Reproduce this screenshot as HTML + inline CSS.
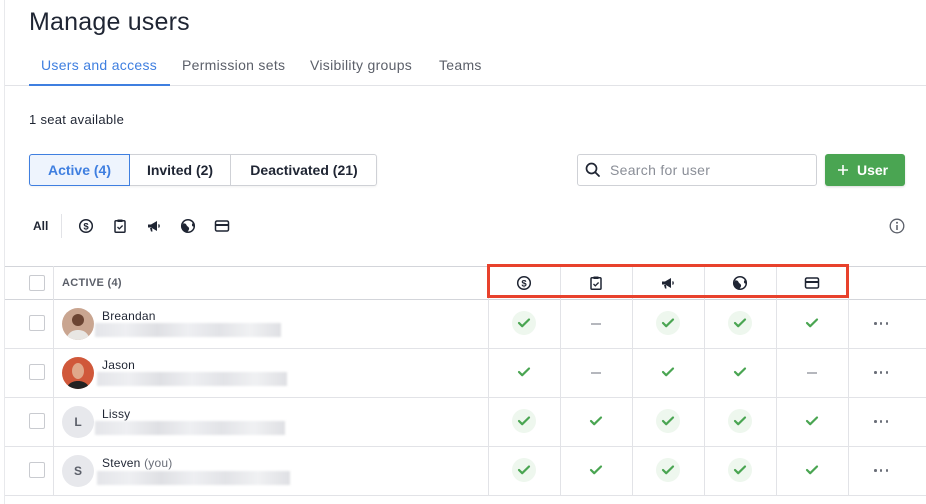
<!DOCTYPE html>
<html><head><meta charset="utf-8"><style>
*{margin:0;padding:0;box-sizing:border-box}
body{width:926px;height:504px;overflow:hidden;background:#fff;font-family:"Liberation Sans",sans-serif;color:#1f2533;position:relative}
.a{position:absolute}
.hl{position:absolute;height:1px;background:#e2e3e7}
.vl{position:absolute;width:1px;background:#e2e3e7}
.cb{position:absolute;width:16px;height:16px;border:1.5px solid #c9cbd0;border-radius:2px;background:#fff}
.ck{position:absolute;width:24px;height:24px;border-radius:50%;display:flex;align-items:center;justify-content:center}
.bg{background:#eef7ee}
.dash{position:absolute;width:10px;height:1.5px;background:#b5b7bd}
.dots{position:absolute;width:14px;height:3px;display:flex;justify-content:space-between}
.dots i{width:2.5px;height:2.5px;border-radius:50%;background:#6a6e78}
.blur{position:absolute;height:14px;background:linear-gradient(90deg,#e4e5e9,#eeeff2,#dfe0e4,#eeeff2,#e2e3e7,#f0f1f3,#dfe0e4);filter:blur(1px)}
.nm{position:absolute;font-size:12px;color:#1f2533;letter-spacing:.2px}
.av{position:absolute;width:32px;height:32px;border-radius:50%;background:#e7e8ec;color:#5b5f69;font-size:12px;font-weight:bold;display:flex;align-items:center;justify-content:center;overflow:hidden}
.t{letter-spacing:.3px}
</style></head><body>
<div class="vl" style="left:4px;top:0;height:504px;background:#e8e9ec"></div>
<div class="a" style="left:29px;top:8px;font-size:25px;color:#1f2533;letter-spacing:.2px">Manage users</div>
<div class="a t" style="left:41px;top:57px;font-size:14px;color:#3f7fe0">Users and access</div>
<div class="a t" style="left:182px;top:57px;font-size:14px;color:#5b5f69">Permission sets</div>
<div class="a t" style="left:310px;top:57px;font-size:14px;color:#5b5f69">Visibility groups</div>
<div class="a t" style="left:439px;top:57px;font-size:14px;color:#5b5f69">Teams</div>
<div class="hl" style="left:5px;top:85px;width:921px"></div>
<div class="a" style="left:29px;top:84px;width:141px;height:2px;background:#3f7fe0"></div>
<div class="a t" style="left:29px;top:112px;font-size:13px">1 seat available</div>

<div class="a" style="left:29px;top:154px;width:348px;height:32px;border:1px solid #cfd1d6;border-radius:3px;box-shadow:0 1px 2px rgba(0,0,0,.06)"></div>
<div class="a" style="left:29px;top:154px;width:101px;height:32px;border:1px solid #3f7fe0;border-radius:3px 0 0 3px;background:#eef4fd;color:#3f7fe0;font-weight:bold;font-size:14px;display:flex;align-items:center;justify-content:center">Active (4)</div>
<div class="a" style="left:130px;top:155px;width:101px;height:30px;border-right:1px solid #cfd1d6;font-weight:bold;font-size:14px;display:flex;align-items:center;justify-content:center">Invited (2)</div>
<div class="a" style="left:231px;top:155px;width:146px;height:30px;font-weight:bold;font-size:14px;display:flex;align-items:center;justify-content:center">Deactivated (21)</div>

<div class="a" style="left:577px;top:154px;width:240px;height:32px;border:1px solid #cfd1d6;border-radius:3px"></div>
<svg class="a" style="left:585px;top:162px" width="16" height="16" viewBox="0 0 16 16"><circle cx="6.5" cy="6.5" r="5" fill="none" stroke="#1f2533" stroke-width="1.7"/><path d="M10.2 10.2L14 14" stroke="#1f2533" stroke-width="1.8" stroke-linecap="round"/></svg>
<div class="a t" style="left:610px;top:162px;font-size:14px;color:#8a8e97">Search for user</div>
<div class="a" style="left:825px;top:154px;width:80px;height:32px;border-radius:3px;background:#4aa552;box-shadow:0 1px 2px rgba(0,0,0,.15)"></div>
<svg class="a" style="left:837px;top:164px" width="12" height="12"><path d="M6 1v10M1 6h10" stroke="#fff" stroke-width="1.6"/></svg>
<div class="a" style="left:857px;top:162px;color:#fff;font-weight:bold;font-size:14px">User</div>

<div class="a" style="left:33px;top:219px;font-size:12px;font-weight:bold">All</div>
<div class="vl" style="left:61px;top:214px;height:24px"></div>
<svg width="0" height="0" style="position:absolute"><defs>
<g id="dol"><circle cx="8" cy="8" r="6.3" fill="none" stroke="#1f2533" stroke-width="1.5"/><text x="8" y="11.3" font-size="9.5" font-family="Liberation Sans" font-weight="bold" text-anchor="middle" fill="#1f2533">$</text></g>
<g id="clip"><rect x="3" y="2.8" width="10" height="11.5" rx="1" fill="none" stroke="#1f2533" stroke-width="1.5"/><rect x="5.5" y="1.5" width="5" height="2.5" fill="#1f2533"/><path d="M5.5 9l1.8 1.8 3.3-3.3" fill="none" stroke="#1f2533" stroke-width="1.3"/></g>
<g id="meg"><path d="M2 6.5h3l6-3.5v10l-6-3.5H2z" fill="#1f2533"/><path d="M4 10l1 3.5h1.5L6 10" fill="#1f2533"/><path d="M12.5 6.5a2 2 0 010 3" fill="none" stroke="#1f2533" stroke-width="1.3"/></g>
<g id="glo"><circle cx="8" cy="8" r="6.3" fill="none" stroke="#1f2533" stroke-width="1.5"/><path d="M3 5.5c1.5-.5 3 0 3.5 1.5s2 1.5 2.5 3-1 3-2 4.5l-1 .2C4 13 2.5 11 2 8.5zM9.5 2.2c1 1.5 2.5 1 3.5 2.5-1 1-1.5 2.5-.5 3.5.8.6 1.5.3 2 .2a6 6 0 00-1-4.5 6 6 0 00-4-1.7z" fill="#1f2533"/></g>
<g id="card"><rect x="1.5" y="3" width="13" height="10" rx="1.5" fill="none" stroke="#1f2533" stroke-width="1.5"/><rect x="1.5" y="6" width="13" height="2" fill="#1f2533"/></g>
<g id="chk"><path d="M3 8l3.2 3.2L13 4.5" fill="none" stroke="#4aa552" stroke-width="2.2" stroke-linecap="round" stroke-linejoin="round"/></g>
</defs></svg>
<svg class="a" style="left:78px;top:218px" width="16" height="16"><use href="#dol"/></svg>
<svg class="a" style="left:112px;top:218px" width="16" height="16"><use href="#clip"/></svg>
<svg class="a" style="left:146px;top:218px" width="16" height="16"><use href="#meg"/></svg>
<svg class="a" style="left:180px;top:218px" width="16" height="16"><use href="#glo"/></svg>
<svg class="a" style="left:214px;top:218px" width="16" height="16"><use href="#card"/></svg>
<svg class="a" style="left:889px;top:218px" width="16" height="16" viewBox="0 0 16 16"><circle cx="8" cy="8" r="6.8" fill="none" stroke="#5b5f69" stroke-width="1.3"/><circle cx="8" cy="4.8" r="1" fill="#5b5f69"/><path d="M8 7v5" stroke="#5b5f69" stroke-width="1.5"/></svg>

<!-- table -->
<div class="hl" style="left:5px;top:266px;width:921px;background:#d3d5da"></div>
<div class="hl" style="left:5px;top:299px;width:921px;background:#d3d5da"></div>
<div class="hl" style="left:5px;top:348px;width:921px"></div>
<div class="hl" style="left:5px;top:397px;width:921px"></div>
<div class="hl" style="left:5px;top:446px;width:921px"></div>
<div class="hl" style="left:5px;top:495px;width:921px"></div>
<div class="vl" style="left:53px;top:266px;height:230px"></div>
<div class="vl" style="left:488px;top:266px;height:230px"></div>
<div class="vl" style="left:560px;top:266px;height:230px"></div>
<div class="vl" style="left:632px;top:266px;height:230px"></div>
<div class="vl" style="left:704px;top:266px;height:230px"></div>
<div class="vl" style="left:776px;top:266px;height:230px"></div>
<div class="vl" style="left:848px;top:266px;height:230px"></div>
<div class="a" style="left:487px;top:264px;width:362px;height:34px;border:3px solid #e8412c"></div>
<div class="cb" style="left:29px;top:275px"></div>
<div class="a" style="left:62px;top:277px;font-size:11px;font-weight:bold;color:#5b5f69;letter-spacing:.3px">ACTIVE (4)</div>
<svg class="a" style="left:516px;top:275px" width="16" height="16"><use href="#dol"/></svg>
<svg class="a" style="left:588px;top:275px" width="16" height="16"><use href="#clip"/></svg>
<svg class="a" style="left:660px;top:275px" width="16" height="16"><use href="#meg"/></svg>
<svg class="a" style="left:732px;top:275px" width="16" height="16"><use href="#glo"/></svg>
<svg class="a" style="left:804px;top:275px" width="16" height="16"><use href="#card"/></svg>

<!-- rows -->
<div class="cb" style="left:29px;top:315px"></div>
<div class="cb" style="left:29px;top:364px"></div>
<div class="cb" style="left:29px;top:413px"></div>
<div class="cb" style="left:29px;top:462px"></div>
<div class="av" style="left:62px;top:308px;background:#c9a590"><svg width="32" height="32"><circle cx="16" cy="12" r="6" fill="#6b4432"/><path d="M4 32c2-8 7-10 12-10s10 2 12 10z" fill="#e8e6e3"/></svg></div>
<div class="av" style="left:62px;top:357px;background:#d0583a"><svg width="32" height="32"><ellipse cx="16" cy="14" rx="6" ry="8" fill="#e0a88a"/><path d="M4 32c2-6 7-8 12-8s10 2 12 8z" fill="#222"/></svg></div>
<div class="av" style="left:62px;top:406px">L</div>
<div class="av" style="left:62px;top:455px">S</div>
<div class="nm" style="left:102px;top:309px">Breandan</div>
<div class="nm" style="left:102px;top:358px">Jason</div>
<div class="nm" style="left:102px;top:407px">Lissy</div>
<div class="nm" style="left:102px;top:456px">Steven <span style="color:#6a6e78">(you)</span></div>
<div class="blur" style="left:95px;top:323px;width:186px"></div>
<div class="blur" style="left:97px;top:372px;width:190px"></div>
<div class="blur" style="left:95px;top:421px;width:190px"></div>
<div class="blur" style="left:97px;top:471px;width:193px"></div>

<!-- row1 -->
<div class="ck bg" style="left:512px;top:311px"><svg width="16" height="16"><use href="#chk"/></svg></div>
<div class="dash" style="left:591px;top:323px"></div>
<div class="ck bg" style="left:656px;top:311px"><svg width="16" height="16"><use href="#chk"/></svg></div>
<div class="ck bg" style="left:728px;top:311px"><svg width="16" height="16"><use href="#chk"/></svg></div>
<div class="ck" style="left:800px;top:311px"><svg width="16" height="16"><use href="#chk"/></svg></div>
<div class="dots" style="left:874px;top:322px"><i></i><i></i><i></i></div>
<!-- row2 -->
<div class="ck" style="left:512px;top:360px"><svg width="16" height="16"><use href="#chk"/></svg></div>
<div class="dash" style="left:591px;top:372px"></div>
<div class="ck" style="left:656px;top:360px"><svg width="16" height="16"><use href="#chk"/></svg></div>
<div class="ck" style="left:728px;top:360px"><svg width="16" height="16"><use href="#chk"/></svg></div>
<div class="dash" style="left:807px;top:372px"></div>
<div class="dots" style="left:874px;top:371px"><i></i><i></i><i></i></div>
<!-- row3 -->
<div class="ck bg" style="left:512px;top:409px"><svg width="16" height="16"><use href="#chk"/></svg></div>
<div class="ck" style="left:584px;top:409px"><svg width="16" height="16"><use href="#chk"/></svg></div>
<div class="ck bg" style="left:656px;top:409px"><svg width="16" height="16"><use href="#chk"/></svg></div>
<div class="ck bg" style="left:728px;top:409px"><svg width="16" height="16"><use href="#chk"/></svg></div>
<div class="ck" style="left:800px;top:409px"><svg width="16" height="16"><use href="#chk"/></svg></div>
<div class="dots" style="left:874px;top:420px"><i></i><i></i><i></i></div>
<!-- row4 -->
<div class="ck bg" style="left:512px;top:458px"><svg width="16" height="16"><use href="#chk"/></svg></div>
<div class="ck" style="left:584px;top:458px"><svg width="16" height="16"><use href="#chk"/></svg></div>
<div class="ck bg" style="left:656px;top:458px"><svg width="16" height="16"><use href="#chk"/></svg></div>
<div class="ck bg" style="left:728px;top:458px"><svg width="16" height="16"><use href="#chk"/></svg></div>
<div class="ck" style="left:800px;top:458px"><svg width="16" height="16"><use href="#chk"/></svg></div>
<div class="dots" style="left:874px;top:469px"><i></i><i></i><i></i></div>
</body></html>
